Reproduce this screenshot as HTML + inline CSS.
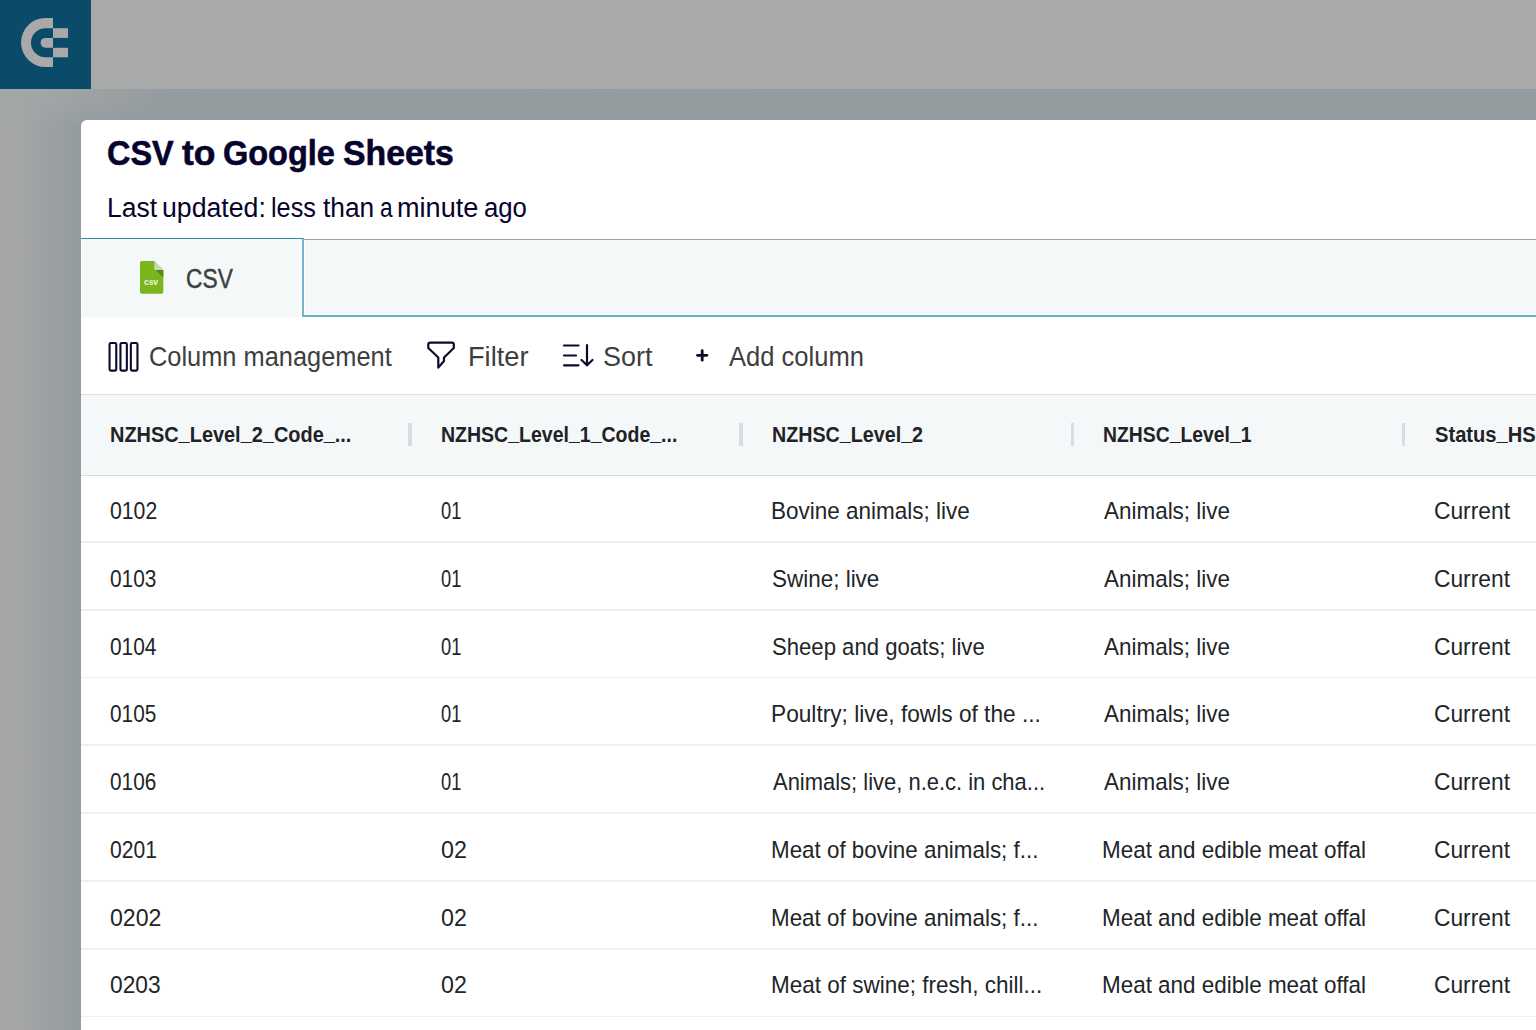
<!DOCTYPE html>
<html><head><meta charset="utf-8">
<style>
html,body{margin:0;padding:0;}
body{width:1536px;height:1030px;overflow:hidden;position:relative;font-family:"Liberation Sans",sans-serif;
background:radial-gradient(ellipse 150px 40px at 20px 89px,rgba(163,166,167,1) 0%,rgba(163,166,167,0.6) 45%,rgba(163,166,167,0) 100%),linear-gradient(90deg,#a5a7a8 0px,#a3a5a6 28px,#9ba0a3 50px,#969da0 68px,#959c9f 81px,#949b9e 1536px);}
.t{position:absolute;white-space:nowrap;transform-origin:0 0;}
.u{position:relative;top:-0.11em;}
#hdr{position:absolute;left:0;top:0;width:1536px;height:89px;background:linear-gradient(180deg,#a9a9a9 0,#a8a9a9 89px);}
#logo{position:absolute;left:0;top:0;width:91px;height:89px;background:#0a4b69;}
#card{position:absolute;left:81px;top:120px;width:1600px;height:1000px;background:#fff;border-top-left-radius:6px;}
#tabbg{position:absolute;left:82px;top:239px;width:219px;height:77.9px;background:#f4f8f9;}
#stripbg{position:absolute;left:304.8px;top:240.4px;width:1232px;height:73.8px;background:#f4f8f9;}
#tabtop{position:absolute;left:81px;top:237.8px;width:222.6px;height:1.4px;background:#3089ae;border-top-right-radius:2px;}
#tabright{position:absolute;left:302.3px;top:239px;width:1.7px;height:77.6px;background:#78b4cc;}
#striptop{position:absolute;left:303.8px;top:238.9px;width:1233px;height:1.1px;background:#91a3ab;}
#stripbot{position:absolute;left:302.3px;top:315.1px;width:1234px;height:1.5px;background:#6aaec8;}
#thead{position:absolute;left:81px;top:394px;width:1455px;height:82px;background:#f4f8f9;border-top:1.8px solid #dcdfe1;border-bottom:1.8px solid #d9dddf;box-sizing:border-box;}
.rl{position:absolute;left:81px;width:1455px;height:1.8px;background:#edeff3;}
.sep{position:absolute;top:423px;width:3.6px;height:22.9px;background:#d9dddf;}
</style></head><body>
<div id="hdr"></div>
<div id="logo"><svg width="91" height="89" viewBox="0 0 91 89">
<g fill="#a9a9a9">
<path d="M53 18 H45.5 A24.5 24.5 0 0 0 45.5 67 H53 V57.3 H45.5 A14.5 14.5 0 0 1 45.5 28.2 H53 Z"/>
<path d="M53 37.9 H45.5 A4.95 4.95 0 0 0 45.5 47.8 H53 Z"/>
<rect x="53" y="28.2" width="15" height="9.7"/>
<rect x="53" y="47.8" width="15" height="9.5"/>
</g></svg></div>
<div id="card"></div>
<div id="tabbg"></div><div id="stripbg"></div>
<div id="tabtop"></div><div id="tabright"></div><div id="striptop"></div><div id="stripbot"></div>
<div id="thead"></div>
<div class="rl" style="top:541.10px"></div>
<div class="rl" style="top:608.88px"></div>
<div class="rl" style="top:676.66px"></div>
<div class="rl" style="top:744.44px"></div>
<div class="rl" style="top:812.22px"></div>
<div class="rl" style="top:880.00px"></div>
<div class="rl" style="top:947.78px"></div>
<div class="rl" style="top:1015.56px"></div>
<div class="sep" style="left:408.1px"></div>
<div class="sep" style="left:739.3px"></div>
<div class="sep" style="left:1070.6px"></div>
<div class="sep" style="left:1401.9px"></div>

<svg style="position:absolute;left:139.7px;top:260.9px" width="24" height="33" viewBox="0 0 24 33">
<path d="M1.6 0 H14.3 L23.3 9 V31.1 A1.6 1.6 0 0 1 21.7 32.7 H1.6 A1.6 1.6 0 0 1 0 31.1 V1.6 A1.6 1.6 0 0 1 1.6 0 Z" fill="#7bb51c"/>
<path d="M14.3 0 L23.3 9 H14.3 Z" fill="#c7d8a9"/>
<path d="M15.6 9 H23.3 V16.4 Z" fill="#5a8716"/>
<text x="4.0" y="24.2" font-family="Liberation Sans" font-weight="bold" font-size="9.3" fill="#eef4e4" textLength="14" lengthAdjust="spacingAndGlyphs">csv</text>
</svg>
<svg style="position:absolute;left:106px;top:340px" width="36" height="34" viewBox="0 0 36 34">
<g fill="none" stroke="#0b0b2e" stroke-width="2.1">
<rect x="3.55" y="3.05" width="6.7" height="27.6" rx="1.3"/>
<rect x="14.45" y="3.05" width="6.4" height="27.6" rx="1.3"/>
<rect x="24.85" y="3.05" width="6.6" height="27.6" rx="1.3"/>
</g></svg>
<svg style="position:absolute;left:424px;top:338px" width="34" height="34" viewBox="0 0 34 34">
<path d="M6.3 4.6 H27.8 A2 2 0 0 1 29.8 6.6 V10 L20 19.5 V23 L14.3 29.6 V19.5 L4.3 10 V6.6 A2 2 0 0 1 6.3 4.6 Z" fill="none" stroke="#0b0b2e" stroke-width="2.2" stroke-linejoin="round"/>
</svg>
<svg style="position:absolute;left:560px;top:340px" width="36" height="30" viewBox="0 0 36 30">
<g stroke="#0b0b2e" stroke-width="2.2" stroke-linecap="round" fill="none">
<path d="M4 5.5 H18.5"/><path d="M4 15.5 H16"/><path d="M4 25.3 H18.5"/>
<path d="M27 5 V25"/><path d="M21.5 20 L27 25.3 L32.5 20"/>
</g></svg>
<svg style="position:absolute;left:694px;top:347px" width="16" height="16" viewBox="0 0 16 16">
<g stroke="#0b0b2e" stroke-width="2.8" stroke-linecap="round"><path d="M3.5 8.3 H12.8"/><path d="M8.2 3.7 V13.2"/></g></svg>
<div class="t" style="left:107.20px;top:136.27px;font-size:34.88px;line-height:34.88px;color:#06042c;font-weight:bold;transform:scaleX(0.9287);-webkit-text-stroke:0.6px #06042c;">CSV</div>
<div class="t" style="left:182.00px;top:136.27px;font-size:34.88px;line-height:34.88px;color:#06042c;font-weight:bold;transform:scaleX(1.0170);-webkit-text-stroke:0.6px #06042c;">to</div>
<div class="t" style="left:223.20px;top:136.27px;font-size:34.88px;line-height:34.88px;color:#06042c;font-weight:bold;transform:scaleX(0.9317);-webkit-text-stroke:0.6px #06042c;">Google</div>
<div class="t" style="left:343.20px;top:136.27px;font-size:34.88px;line-height:34.88px;color:#06042c;font-weight:bold;transform:scaleX(0.9688);-webkit-text-stroke:0.6px #06042c;">Sheets</div>
<div class="t" style="left:107.00px;top:193.62px;font-size:27.62px;line-height:27.62px;color:#06042c;transform:scaleX(0.9602);">Last</div>
<div class="t" style="left:162.20px;top:193.62px;font-size:27.62px;line-height:27.62px;color:#06042c;transform:scaleX(0.9664);">updated:</div>
<div class="t" style="left:271.40px;top:193.62px;font-size:27.62px;line-height:27.62px;color:#06042c;transform:scaleX(0.9133);">less</div>
<div class="t" style="left:323.40px;top:193.62px;font-size:27.62px;line-height:27.62px;color:#06042c;transform:scaleX(0.9521);">than</div>
<div class="t" style="left:379.60px;top:193.62px;font-size:27.62px;line-height:27.62px;color:#06042c;transform:scaleX(0.8200);">a</div>
<div class="t" style="left:397.00px;top:193.62px;font-size:27.62px;line-height:27.62px;color:#06042c;transform:scaleX(0.9813);">minute</div>
<div class="t" style="left:483.80px;top:193.62px;font-size:27.62px;line-height:27.62px;color:#06042c;transform:scaleX(0.9320);">ago</div>
<div class="t" style="left:186.20px;top:264.13px;font-size:28.20px;line-height:28.20px;color:#3e3e3e;transform:scaleX(0.8077);-webkit-text-stroke:0.45px #3e3e3e;">CSV</div>
<div class="t" style="left:148.60px;top:343.56px;font-size:26.74px;line-height:26.74px;color:#3e3e3e;transform:scaleX(0.9496);">Column management</div>
<div class="t" style="left:468.00px;top:343.66px;font-size:26.74px;line-height:26.74px;color:#3e3e3e;transform:scaleX(1.0175);">Filter</div>
<div class="t" style="left:603.20px;top:343.66px;font-size:26.74px;line-height:26.74px;color:#3e3e3e;transform:scaleX(1.0067);">Sort</div>
<div class="t" style="left:729.20px;top:343.66px;font-size:26.74px;line-height:26.74px;color:#3e3e3e;transform:scaleX(0.9554);">Add column</div>
<div class="t" style="left:110.40px;top:424.05px;font-size:22.38px;line-height:22.38px;color:#1f2326;font-weight:bold;transform:scaleX(0.8903);">NZHSC<span class="u">_</span>Level<span class="u">_</span>2<span class="u">_</span>Code<span class="u">_</span>...</div>
<div class="t" style="left:441.00px;top:424.05px;font-size:22.38px;line-height:22.38px;color:#1f2326;font-weight:bold;transform:scaleX(0.8717);">NZHSC<span class="u">_</span>Level<span class="u">_</span>1<span class="u">_</span>Code<span class="u">_</span>...</div>
<div class="t" style="left:772.20px;top:424.05px;font-size:22.38px;line-height:22.38px;color:#1f2326;font-weight:bold;transform:scaleX(0.8800);">NZHSC<span class="u">_</span>Level<span class="u">_</span>2</div>
<div class="t" style="left:1103.00px;top:424.05px;font-size:22.38px;line-height:22.38px;color:#1f2326;font-weight:bold;transform:scaleX(0.8647);">NZHSC<span class="u">_</span>Level<span class="u">_</span>1</div>
<div class="t" style="left:1434.60px;top:424.05px;font-size:22.38px;line-height:22.38px;color:#1f2326;font-weight:bold;transform:scaleX(0.9000);">Status<span class="u">_</span>HS</div>
<div class="t" style="left:109.80px;top:499.25px;font-size:24.27px;line-height:24.27px;color:#222528;transform:scaleX(0.8746);">0102</div>
<div class="t" style="left:440.80px;top:499.25px;font-size:24.27px;line-height:24.27px;color:#222528;transform:scaleX(0.7537);">01</div>
<div class="t" style="left:770.60px;top:499.25px;font-size:24.27px;line-height:24.27px;color:#222528;transform:scaleX(0.9266);">Bovine animals; live</div>
<div class="t" style="left:1103.80px;top:499.25px;font-size:24.27px;line-height:24.27px;color:#222528;transform:scaleX(0.9252);">Animals; live</div>
<div class="t" style="left:1434.00px;top:499.25px;font-size:24.27px;line-height:24.27px;color:#222528;transform:scaleX(0.9388);">Current</div>
<div class="t" style="left:109.80px;top:566.97px;font-size:24.27px;line-height:24.27px;color:#222528;transform:scaleX(0.8592);">0103</div>
<div class="t" style="left:440.80px;top:566.97px;font-size:24.27px;line-height:24.27px;color:#222528;transform:scaleX(0.7537);">01</div>
<div class="t" style="left:771.60px;top:566.97px;font-size:24.27px;line-height:24.27px;color:#222528;transform:scaleX(0.9255);">Swine; live</div>
<div class="t" style="left:1103.80px;top:566.97px;font-size:24.27px;line-height:24.27px;color:#222528;transform:scaleX(0.9252);">Animals; live</div>
<div class="t" style="left:1434.00px;top:566.97px;font-size:24.27px;line-height:24.27px;color:#222528;transform:scaleX(0.9388);">Current</div>
<div class="t" style="left:109.80px;top:634.69px;font-size:24.27px;line-height:24.27px;color:#222528;transform:scaleX(0.8609);">0104</div>
<div class="t" style="left:440.80px;top:634.69px;font-size:24.27px;line-height:24.27px;color:#222528;transform:scaleX(0.7537);">01</div>
<div class="t" style="left:771.60px;top:634.69px;font-size:24.27px;line-height:24.27px;color:#222528;transform:scaleX(0.9113);">Sheep and goats; live</div>
<div class="t" style="left:1103.80px;top:634.69px;font-size:24.27px;line-height:24.27px;color:#222528;transform:scaleX(0.9252);">Animals; live</div>
<div class="t" style="left:1434.00px;top:634.69px;font-size:24.27px;line-height:24.27px;color:#222528;transform:scaleX(0.9388);">Current</div>
<div class="t" style="left:109.80px;top:702.41px;font-size:24.27px;line-height:24.27px;color:#222528;transform:scaleX(0.8573);">0105</div>
<div class="t" style="left:440.80px;top:702.41px;font-size:24.27px;line-height:24.27px;color:#222528;transform:scaleX(0.7537);">01</div>
<div class="t" style="left:770.60px;top:702.41px;font-size:24.27px;line-height:24.27px;color:#222528;transform:scaleX(0.9351);">Poultry; live, fowls of the ...</div>
<div class="t" style="left:1103.80px;top:702.41px;font-size:24.27px;line-height:24.27px;color:#222528;transform:scaleX(0.9252);">Animals; live</div>
<div class="t" style="left:1434.00px;top:702.41px;font-size:24.27px;line-height:24.27px;color:#222528;transform:scaleX(0.9388);">Current</div>
<div class="t" style="left:109.80px;top:770.13px;font-size:24.27px;line-height:24.27px;color:#222528;transform:scaleX(0.8573);">0106</div>
<div class="t" style="left:440.80px;top:770.13px;font-size:24.27px;line-height:24.27px;color:#222528;transform:scaleX(0.7537);">01</div>
<div class="t" style="left:772.60px;top:770.13px;font-size:24.27px;line-height:24.27px;color:#222528;transform:scaleX(0.9047);">Animals; live, n.e.c. in cha...</div>
<div class="t" style="left:1103.80px;top:770.13px;font-size:24.27px;line-height:24.27px;color:#222528;transform:scaleX(0.9252);">Animals; live</div>
<div class="t" style="left:1434.00px;top:770.13px;font-size:24.27px;line-height:24.27px;color:#222528;transform:scaleX(0.9388);">Current</div>
<div class="t" style="left:109.80px;top:837.85px;font-size:24.27px;line-height:24.27px;color:#222528;transform:scaleX(0.8684);">0201</div>
<div class="t" style="left:440.80px;top:837.85px;font-size:24.27px;line-height:24.27px;color:#222528;transform:scaleX(0.9568);">02</div>
<div class="t" style="left:770.60px;top:837.85px;font-size:24.27px;line-height:24.27px;color:#222528;transform:scaleX(0.9220);">Meat of bovine animals; f...</div>
<div class="t" style="left:1101.80px;top:837.85px;font-size:24.27px;line-height:24.27px;color:#222528;transform:scaleX(0.9248);">Meat and edible meat offal</div>
<div class="t" style="left:1434.00px;top:837.85px;font-size:24.27px;line-height:24.27px;color:#222528;transform:scaleX(0.9388);">Current</div>
<div class="t" style="left:109.80px;top:905.57px;font-size:24.27px;line-height:24.27px;color:#222528;transform:scaleX(0.9520);">0202</div>
<div class="t" style="left:440.80px;top:905.57px;font-size:24.27px;line-height:24.27px;color:#222528;transform:scaleX(0.9568);">02</div>
<div class="t" style="left:770.60px;top:905.57px;font-size:24.27px;line-height:24.27px;color:#222528;transform:scaleX(0.9220);">Meat of bovine animals; f...</div>
<div class="t" style="left:1101.80px;top:905.57px;font-size:24.27px;line-height:24.27px;color:#222528;transform:scaleX(0.9248);">Meat and edible meat offal</div>
<div class="t" style="left:1434.00px;top:905.57px;font-size:24.27px;line-height:24.27px;color:#222528;transform:scaleX(0.9388);">Current</div>
<div class="t" style="left:109.80px;top:973.29px;font-size:24.27px;line-height:24.27px;color:#222528;transform:scaleX(0.9384);">0203</div>
<div class="t" style="left:440.80px;top:973.29px;font-size:24.27px;line-height:24.27px;color:#222528;transform:scaleX(0.9568);">02</div>
<div class="t" style="left:770.60px;top:973.29px;font-size:24.27px;line-height:24.27px;color:#222528;transform:scaleX(0.9270);">Meat of swine; fresh, chill...</div>
<div class="t" style="left:1101.80px;top:973.29px;font-size:24.27px;line-height:24.27px;color:#222528;transform:scaleX(0.9248);">Meat and edible meat offal</div>
<div class="t" style="left:1434.00px;top:973.29px;font-size:24.27px;line-height:24.27px;color:#222528;transform:scaleX(0.9388);">Current</div>

</body></html>
